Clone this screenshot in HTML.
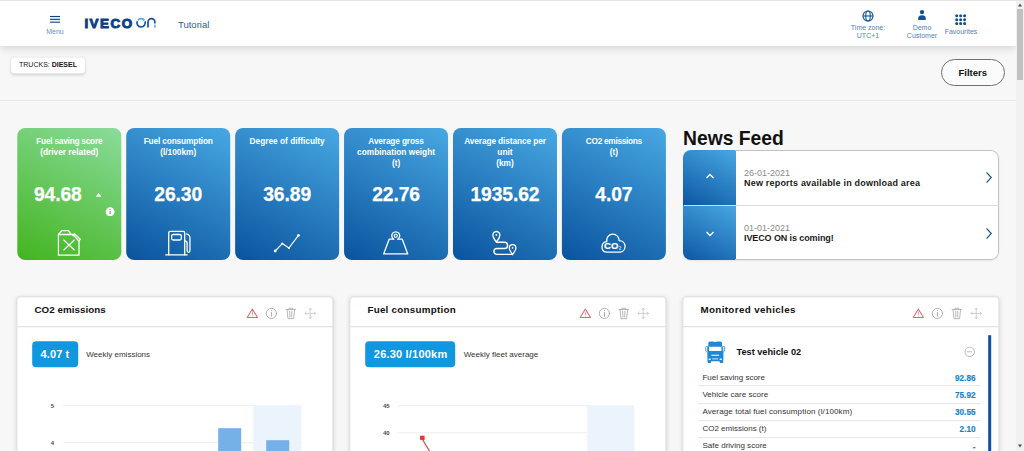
<!DOCTYPE html>
<html lang="en">
<head>
<meta charset="utf-8">
<title>IVECO ON - Tutorial</title>
<style>
*{box-sizing:border-box;margin:0;padding:0}
html,body{width:1024px;height:451px;overflow:hidden;background:#f7f7f7;font-family:"Liberation Sans","DejaVu Sans",sans-serif;color:#1a1a1a}
.abs{position:absolute}
#page{position:absolute;left:0;top:0;width:1016px;height:451px;overflow:hidden;background:#f7f7f7}
#topline{position:absolute;left:0;top:0;width:1024px;height:1px;background:#e4e4e4;z-index:20}
#hdr{position:absolute;left:0;top:0;width:1016px;height:45.600px;background:#fff;box-shadow:0 3px 8px rgba(0,0,0,.13);z-index:10}
.nav{position:absolute;color:#5382b3;font-size:7px;text-align:center;white-space:nowrap;line-height:8px}
#sep{position:absolute;left:0;top:100px;width:1016px;height:1px;background:#e9e9e9}
.chip{position:absolute;left:11px;top:57px;transform:translateY(.4px);width:74px;height:16px;background:#fff;border-radius:4px;box-shadow:0 1px 3px rgba(0,0,0,.18);font-size:7px;line-height:16.500px;text-align:center;color:#161616;white-space:nowrap}
.filters{position:absolute;left:941px;top:58.500px;width:63.500px;height:27.600px;border:1px solid #707070;border-radius:14px;background:#fbfbfb;font-size:9.5px;font-weight:bold;line-height:25.600px;text-align:center;color:#111}
.kpi{position:absolute;top:128px;width:104px;height:132.300px;border-radius:8px;background:linear-gradient(28deg,#0a539e 0%,#48a8e2 100%);color:#fff;text-align:center}
.kpi.g{background:linear-gradient(28deg,#43b41f 0%,#8adc9c 100%)}
.kpi .t{position:absolute;left:0;right:0;top:8.4px;font-size:8.3px;line-height:11px;font-weight:bold;white-space:nowrap}
.kpi .v{position:absolute;left:0;right:0;top:55px;font-size:19.300px;line-height:24px;font-weight:bold;white-space:nowrap;-webkit-text-stroke:.25px #fff;letter-spacing:-.1px}
.kpi svg{position:absolute}
h1.nf{position:absolute;left:683px;top:127.400px;font-size:19.3px;line-height:24px;font-weight:bold;color:#111;white-space:nowrap}
.news{position:absolute;left:683px;top:149.700px;width:316.300px;height:110.600px;border-radius:8px;background:#fff;overflow:hidden;box-shadow:0 1px 2px rgba(0,0,0,.08)}
.news>*{margin-left:1px;margin-top:1px}
.news .bd{position:absolute;left:52px;top:0;right:0;bottom:0;margin:0;border:1px solid #c2c2c2;border-left:none;border-radius:0 8px 8px 0}
.news .col{position:absolute;left:0;top:0;margin:0;width:53px;height:55.500px;background:linear-gradient(28deg,#0c56a2 0%,#48a8e2 100%)}
.news .div{position:absolute;left:0;top:54.300px;width:316px;height:1px;background:#dcdcdc}
.news .d{position:absolute;left:60px;font-size:9px;line-height:10px;color:#8a8a8a;white-space:nowrap}
.news .h{position:absolute;left:60px;font-size:9px;letter-spacing:.2px;line-height:10px;color:#1a1a1a;font-weight:bold;white-space:nowrap}
.w{position:absolute;top:297px;width:316.800px;height:170px;background:#fff;border:1px solid #e0e0e0;border-radius:4px;box-shadow:0 1px 4px rgba(0,0,0,.13);transform:translate(-.6px,-.6px)}
.w .in{position:absolute;left:0;top:0;right:0;bottom:0;transform:translate(.8px,.8px)}
.w .hd{position:absolute;left:-1px;top:-1px;width:316px;height:30px;border-bottom:1px solid #dedede}
.w .ti{position:absolute;left:16.200px;top:5.100px;font-size:9.8px;line-height:13px;font-weight:bold;color:#111;white-space:nowrap}
.badge{position:absolute;left:14px;top:43px;height:26px;border-radius:4px;background:#1197e0;color:#fff;font-size:11px;letter-spacing:.1px;font-weight:bold;line-height:26px;text-align:center;white-space:nowrap}
.lbl{position:absolute;top:52px;font-size:8px;line-height:10px;color:#333;white-space:nowrap}
.ax{position:absolute;font-size:6px;line-height:8px;color:#4a4a4a;font-weight:bold;text-align:right;width:12px}
.gl{position:absolute;height:1px;background:#eeeeee}
.rl{position:absolute;left:14.300px;width:281.400px;height:1px;background:#e4e4e4}
.row{position:absolute;left:16.5px;width:279.5px;height:17px;padding-left:1.7px;font-size:8px;letter-spacing:.05px;line-height:17px;color:#333;white-space:nowrap}
.row b{position:absolute;right:4.700px;top:.600px;color:#1583cf;font-size:8.200px;letter-spacing:0;-webkit-text-stroke:.15px #1583cf}
#sb{position:absolute;left:1016px;top:0;width:8px;height:451px;background:#f1f1f1}
#sb .th{position:absolute;left:1.300px;top:9px;width:5.700px;height:71px;background:#c1c1c1}
</style>
</head>
<body>
<div id="page">
  <div id="hdr">
    <svg class="abs" style="left:50px;top:15px" width="10" height="9" viewBox="0 0 10 9"><rect x="0" y="1.400" width="10" height="5.800" fill="#d9ebf8" opacity=".7"/><rect x="0" y=".95" width="10" height="1.050" fill="#133f78"/><rect x="0" y="3.800" width="10" height="1.050" fill="#133f78"/><rect x="0" y="6.650" width="10" height="1.150" fill="#2a5388"/></svg>
    <div class="nav" style="left:40px;top:28px;width:30px;color:#6690bb">Menu</div>
    <div class="abs" id="logo" style="left:84.400px;top:15.600px;font-size:13.400px;line-height:16px;font-weight:bold;color:#0b3f86;letter-spacing:1.500px;white-space:nowrap;-webkit-text-stroke:.95px #0b3f86;transform:scaleX(1.0);transform-origin:0 0">IVECO</div>
    <svg class="abs" style="left:135px;top:16px" width="24" height="14" viewBox="0 0 24 14" fill="none" stroke-width="1.650">
      <path d="M2.920 4.130 A4.150 4.150 0 0 1 9.500 4.420" stroke="#4ab0e8"/>
      <path d="M10 5.380 A4.150 4.150 0 1 1 2.340 5.050" stroke="#14509a"/>
      <path d="M13 11.6 V6.1 A3.45 3.45 0 0 1 19.9 6.1 V7.4" stroke="#14509a"/>
      <rect x="19.15" y="8.6" width="1.5" height="3" fill="#4ab0e8" stroke="none"/>
    </svg>
    <div class="abs" style="left:178px;top:18.500px;font-size:9.5px;line-height:12px;color:#2a5f99;white-space:nowrap">Tutorial</div>

    <svg class="abs" style="left:862.300px;top:9.500px" width="12" height="12" viewBox="0 0 12 12" fill="none" stroke="#1a5796" stroke-width="1.150"><circle cx="6" cy="6" r="5"/><ellipse cx="6" cy="6" rx="2.300" ry="5"/><path d="M1 6H11"/></svg>
    <div class="nav" style="left:838px;top:23.5px;width:60px;line-height:8.5px">Time zone:<br>UTC+1</div>
    <svg class="abs" style="left:917px;top:9px" width="10" height="12" viewBox="0 0 10 12" fill="#14509a"><circle cx="5" cy="3.100" r="2.200"/><path d="M1.200 11 V9.600 Q1.200 6.200 5 6.200 Q8.800 6.200 8.800 9.600 V11 Z"/></svg>
    <div class="nav" style="left:892px;top:23.5px;width:60px;line-height:8.5px">Demo<br>Customer</div>
    <svg class="abs" style="left:955.200px;top:13.600px" width="11.300" height="11.300" viewBox="0 0 12 12" fill="#14509a"><circle cx="1.8" cy="1.8" r="1.6"/><circle cx="6" cy="1.8" r="1.6"/><circle cx="10.2" cy="1.8" r="1.6"/><circle cx="1.8" cy="6" r="1.6"/><circle cx="6" cy="6" r="1.6"/><circle cx="10.2" cy="6" r="1.6"/><circle cx="1.8" cy="10.2" r="1.6"/><circle cx="6" cy="10.2" r="1.6"/><circle cx="10.2" cy="10.2" r="1.6"/></svg>
    <div class="nav" style="left:931px;top:27.700px;width:60px">Favourites</div>
  </div>

  <div class="chip">TRUCKS: <b>DIESEL</b></div>
  <div class="filters">Filters</div>
  <div id="sep"></div>

  <!-- KPI cards -->
  <div class="kpi g" style="left:17px;transform:translateX(0.3px)">
    <div class="t"><span style="letter-spacing:-.24px">Fuel saving score</span><br>(driver related)</div>
    <div class="v" style="left:-23px">94.68</div>
    <svg style="left:78.300px;top:63.800px" width="6.600" height="5.500" viewBox="0 0 6 5"><path d="M3 0.6 L5.6 4.4 H0.4 Z" fill="#fff"/></svg>
    <svg style="left:88.300px;top:78.700px" width="9.600" height="9.600" viewBox="0 0 9 9"><circle cx="4.5" cy="4.5" r="4.2" fill="#fff"/><rect x="4" y="3.8" width="1" height="3" fill="#4cb82e"/><rect x="4" y="2" width="1" height="1" fill="#4cb82e"/></svg>
    <svg style="left:40px;top:100px" width="26" height="30" viewBox="0 0 26 30" fill="none" stroke="#fff" stroke-width="1.3" stroke-linejoin="round" stroke-linecap="round"><path d="M1.1 27.2 V6.5 H15.5 L21.7 13 V27.2 Z"/><path d="M1.1 6.500 L4.400 2.700 H11.200 L13.700 6.500"/><path d="M15.500 7.500 L17.100 5.700 L23 11.200 L21.300 13"/><path d="M6.500 12 L17 22 M17 12 L6.500 22" stroke-width="1.1"/></svg>
  </div>
  <div class="kpi" style="left:126px;transform:translateX(0.22px)">
    <div class="t"><span style="letter-spacing:-.15px">Fuel consumption</span><br>(l/100km)</div>
    <div class="v">26.30</div>
    <svg style="left:38px;top:101px" width="28" height="28" viewBox="0 0 28 28" fill="none" stroke="#fff" stroke-width="1.3" stroke-linejoin="round" stroke-linecap="round"><path d="M4.500 25.800 V4 Q4.500 2.400 6.100 2.400 H18.900 Q20.500 2.400 20.500 4 V25.800"/><path d="M1.500 25.800 H23"/><rect x="7.400" y="5.500" width="9.700" height="5.500" rx="1.500"/><path d="M20.500 11.800 Q22.900 11.800 22.900 14 V21.500 Q22.900 23.300 24.300 23.300 Q25.700 23.300 25.700 21.500 V8.800 Q25.700 5.800 22.300 4.900"/></svg>
  </div>
  <div class="kpi" style="left:235px;transform:translateX(0.14px)">
    <div class="t">Degree of difficulty</div>
    <div class="v">36.89</div>
    <svg style="left:36px;top:104px" width="32" height="24" viewBox="0 0 32 24" fill="none" stroke="#fff" stroke-width="1.3" stroke-linejoin="round" stroke-linecap="round"><path d="M4.100 19 L11.100 11.600 L17.800 16 L27.300 3.400" stroke-width="1.200"/><circle cx="4.100" cy="19" r="1.400" fill="#fff" stroke="none"/><circle cx="27.300" cy="3.400" r="1.400" fill="#fff" stroke="none"/><circle cx="11.100" cy="11.600" r="1" fill="#fff" stroke="none"/><circle cx="17.800" cy="16" r="1" fill="#fff" stroke="none"/></svg>
  </div>
  <div class="kpi" style="left:344px;transform:translateX(0.06px)">
    <div class="t"><span style="letter-spacing:-.15px">Average gross</span><br>combination weight<br>(t)</div>
    <div class="v">22.76</div>
    <svg style="left:36px;top:100px" width="32" height="28" viewBox="0 0 32 28" fill="none" stroke="#fff" stroke-width="1.3" stroke-linejoin="round" stroke-linecap="round"><path d="M13.600 11.200 H9.100 L3.600 25.900 H27.700 L22.200 11.200 H17.800"/><path d="M13.600 11.200 A4 4 0 1 1 17.800 11.200"/><circle cx="15.700" cy="7.800" r="1.600" stroke-width="1.100"/></svg>
  </div>
  <div class="kpi" style="left:453px;transform:translateX(-0.02px)">
    <div class="t"><span style="letter-spacing:-.1px">Average distance per</span><br>unit<br>(km)</div>
    <div class="v">1935.62</div>
    <svg style="left:36px;top:100px" width="32" height="30" viewBox="0 0 32 30" fill="none" stroke="#fff" stroke-width="1.3" stroke-linejoin="round" stroke-linecap="round"><path d="M7.4 14.1 C6.18 11.90 3.9000000000000004 10.32 3.9000000000000004 7 A3.5 3.5 0 1 1 10.9 7 C10.9 10.32 8.62 11.90 7.4 14.1 Z"/><circle cx="7.400" cy="6.900" r=".9" fill="#fff" stroke="none"/><path d="M23.6 26.6 C22.45 24.40 20.3 23.03 20.3 19.9 A3.3 3.3 0 1 1 26.900000000000002 19.9 C26.900000000000002 23.03 24.76 24.40 23.6 26.6 Z"/><circle cx="23.600" cy="19.800" r=".9" fill="#fff" stroke="none"/><path d="M7.600 14.300 H15.500 A3.100 3.100 0 0 1 15.500 20.500 H7.900 A2.950 2.950 0 0 0 7.900 26.400 H23.300" stroke-width="1.400"/></svg>
  </div>
  <div class="kpi" style="left:562px;transform:translateX(-0.1px)">
    <div class="t"><span style="letter-spacing:-.3px">CO2 emissions</span><br>(t)</div>
    <div class="v">4.07</div>
    <svg style="left:36px;top:102px" width="32" height="26" viewBox="0 0 32 26" fill="none" stroke="#fff" stroke-width="1.3" stroke-linejoin="round" stroke-linecap="round"><path d="M8.500 22.200 A5.300 5.300 0 0 1 8.900 11.700 A6.220 6.220 0 1 1 21.200 10.600 A5.850 5.850 0 0 1 22.400 22.200 Z"/><text x="6.200" y="19.400" textLength="14.300" lengthAdjust="spacingAndGlyphs" font-family="Liberation Sans, sans-serif" font-size="8.600" font-weight="bold" fill="#fff" stroke="#fff" stroke-width=".2">CO</text><text x="20.900" y="20.300" font-family="Liberation Sans, sans-serif" font-size="4.500" font-weight="bold" fill="#bfe3fa" stroke="none">2</text></svg>
  </div>

  <!-- News feed -->
  <h1 class="nf">News Feed</h1>
  <div class="news">
    <div class="col"></div>
    <div class="col" style="top:55.500px"></div>
    <div class="bd"></div>
    <div class="div"></div>
    <svg class="abs" style="left:21px;top:22px" width="10" height="6" viewBox="0 0 10 6" fill="none" stroke="#fff" stroke-width="1.3"><path d="M1.500 5 L5 1.500 L8.500 5"/></svg>
    <svg class="abs" style="left:21px;top:80px" width="10" height="6" viewBox="0 0 10 6" fill="none" stroke="#fff" stroke-width="1.3"><path d="M1.500 1 L5 4.500 L8.500 1"/></svg>
    <div class="d" style="top:17px">26-01-2021</div>
    <div class="h" style="top:27px">New reports available in download area</div>
    <div class="d" style="top:72px">01-01-2021</div>
    <div class="h" style="top:82px;letter-spacing:-.1px">IVECO ON is coming!</div>
    <svg class="abs" style="left:300.700px;top:20.500px" width="8" height="13" viewBox="0 0 8 13" fill="none" stroke="#14509a" stroke-width="1.150"><path d="M1.500 1.300 L6.300 6.500 L1.500 11.700"/></svg>
    <svg class="abs" style="left:300.700px;top:76px" width="8" height="13" viewBox="0 0 8 13" fill="none" stroke="#14509a" stroke-width="1.150"><path d="M1.500 1.300 L6.300 6.500 L1.500 11.700"/></svg>
  </div>

  <!-- widgets -->
  <div class="w" style="left:17px">
    <div class="in">
    <div class="hd"></div>
    <div class="ti" style="letter-spacing:.05px">CO2 emissions</div>
    <svg class="abs" style="left:226px;top:8px" width="80" height="16" viewBox="0 0 80 16" fill="none" stroke-linejoin="round" stroke-linecap="round"><path d="M8.150 2.900 L13.300 11.400 H3 Z" stroke="#d96b74" stroke-width="1.050"/><path d="M8.150 5.700 V8.600 M8.150 9.900 V10" stroke="#e39aa0" stroke-width=".9"/><circle cx="27.200" cy="7.200" r="5.100" stroke="#9c9c9c" stroke-width=".8"/><path d="M27.200 6.300 V10 M27.200 4.300 V4.400" stroke="#9c9c9c" stroke-width=".9"/><path d="M41.900 3.300 H51.300 M44.800 3.200 V2 H48.400 V3.200 M42.800 3.500 L43.800 12.500 H49.400 L50.400 3.500 M45.500 5 L45.700 11 M47.700 5 L47.500 11" stroke="#a6a6a6" stroke-width=".8"/><path d="M60.800 7.200 H71.200 M66 2 V12.400 M62.200 5.800 L60.800 7.200 L62.200 8.600 M69.800 5.800 L71.200 7.200 L69.800 8.600 M64.600 3.400 L66 2 L67.400 3.400 M64.600 11 L66 12.400 L67.400 11" stroke="#bdbdbd" stroke-width=".7"/></svg>
    <div class="badge" style="width:45.600px">4.07 t</div>
    <div class="lbl" style="left:68px">Weekly emissions</div>
    <div class="ax" style="left:24px;top:104px">5</div>
    <div class="ax" style="left:24px;top:141px">4</div>
    <div class="gl" style="left:44.500px;top:107px;width:239px"></div>
    <div class="gl" style="left:44.500px;top:144px;width:239px"></div>
    <div class="abs" style="left:235.300px;top:107px;width:48.200px;height:62px;background:#ebf4fd"></div>
    <div class="abs" style="left:200.400px;top:130px;width:22.800px;height:40px;background:#76b0e9"></div>
    <div class="abs" style="left:248.200px;top:142.400px;width:22.800px;height:30px;background:#76b0e9"></div>
    </div>
  </div>
  <div class="w" style="left:350px">
    <div class="in">
    <div class="hd"></div>
    <div class="ti" style="letter-spacing:.27px">Fuel consumption</div>
    <svg class="abs" style="left:226px;top:8px" width="80" height="16" viewBox="0 0 80 16" fill="none" stroke-linejoin="round" stroke-linecap="round"><path d="M8.150 2.900 L13.300 11.400 H3 Z" stroke="#d96b74" stroke-width="1.050"/><path d="M8.150 5.700 V8.600 M8.150 9.900 V10" stroke="#e39aa0" stroke-width=".9"/><circle cx="27.200" cy="7.200" r="5.100" stroke="#9c9c9c" stroke-width=".8"/><path d="M27.200 6.300 V10 M27.200 4.300 V4.400" stroke="#9c9c9c" stroke-width=".9"/><path d="M41.900 3.300 H51.300 M44.800 3.200 V2 H48.400 V3.200 M42.800 3.500 L43.800 12.500 H49.400 L50.400 3.500 M45.500 5 L45.700 11 M47.700 5 L47.500 11" stroke="#a6a6a6" stroke-width=".8"/><path d="M60.800 7.200 H71.200 M66 2 V12.400 M62.200 5.800 L60.800 7.200 L62.200 8.600 M69.800 5.800 L71.200 7.200 L69.800 8.600 M64.600 3.400 L66 2 L67.400 3.400 M64.600 11 L66 12.400 L67.400 11" stroke="#bdbdbd" stroke-width=".7"/></svg>
    <div class="badge" style="left:14.300px;width:90.200px;letter-spacing:.2px">26.30 l/100km</div>
    <div class="lbl" style="left:112.500px">Weekly fleet average</div>
    <div class="ax" style="left:26.500px;top:104px">45</div>
    <div class="ax" style="left:26.500px;top:131px">40</div>
    <div class="gl" style="left:47.300px;top:107px;width:236.200px"></div>
    <div class="gl" style="left:47.300px;top:134px;width:236.200px"></div>
    <div class="abs" style="left:236.100px;top:107px;width:47.400px;height:62px;background:#ebf4fd"></div>
    <svg class="abs" style="left:66px;top:134px" width="20" height="22" viewBox="0 0 20 22"><rect x="2.900" y="3.500" width="4.500" height="4.300" fill="#e53935"/><path d="M5.200 7 L12.400 19" stroke="#e0474a" stroke-width="1.250" fill="none"/></svg>
    </div>
  </div>
  <div class="w" style="left:683px">
    <div class="in">
    <div class="hd"></div>
    <div class="ti" style="letter-spacing:.37px">Monitored vehicles</div>
    <svg class="abs" style="left:226px;top:8px" width="80" height="16" viewBox="0 0 80 16" fill="none" stroke-linejoin="round" stroke-linecap="round"><path d="M8.150 2.900 L13.300 11.400 H3 Z" stroke="#d96b74" stroke-width="1.050"/><path d="M8.150 5.700 V8.600 M8.150 9.900 V10" stroke="#e39aa0" stroke-width=".9"/><circle cx="27.200" cy="7.200" r="5.100" stroke="#9c9c9c" stroke-width=".8"/><path d="M27.200 6.300 V10 M27.200 4.300 V4.400" stroke="#9c9c9c" stroke-width=".9"/><path d="M41.900 3.300 H51.300 M44.800 3.200 V2 H48.400 V3.200 M42.800 3.500 L43.800 12.500 H49.400 L50.400 3.500 M45.500 5 L45.700 11 M47.700 5 L47.500 11" stroke="#a6a6a6" stroke-width=".8"/><path d="M60.800 7.200 H71.200 M66 2 V12.400 M62.200 5.800 L60.800 7.200 L62.200 8.600 M69.800 5.800 L71.200 7.200 L69.800 8.600 M64.600 3.400 L66 2 L67.400 3.400 M64.600 11 L66 12.400 L67.400 11" stroke="#bdbdbd" stroke-width=".7"/></svg>
    <div class="abs" style="left:304.300px;top:37px;width:2.300px;height:130px;background:#0d4f9a"></div>
    <svg class="abs" style="left:20px;top:42px" width="24" height="25" viewBox="0 0 24 25"><g fill="#1e88d8"><path d="M4.100 6.600 V3.400 Q4.100 1.400 6.100 1.400 H15.900 Q17.900 1.400 17.900 3.400 V6.600 Z"/><rect x="3.200" y="10.900" width="16" height="10.200" rx="1.200"/><rect x="3.400" y="20.300" width="3.500" height="2.600" rx=".8"/><rect x="15.500" y="20.300" width="3.500" height="2.600" rx=".8"/><rect x="3.500" y="6.200" width="1.300" height="5.200"/><rect x="17.200" y="6.200" width="1.300" height="5.200"/></g><g fill="none" stroke="#1e88d8" stroke-width=".8"><rect x="1.500" y="6.300" width="1.900" height="4.800" rx=".7"/><rect x="18.600" y="6.300" width="1.900" height="4.800" rx=".7"/></g><g fill="#fff"><rect x="7" y="14.500" width="8" height="1" rx=".4"/><rect x="4.300" y="18.400" width="2.300" height="1.300" rx=".6"/><rect x="15.400" y="18.400" width="2.300" height="1.300" rx=".6"/><rect x="8" y="18.300" width="6" height=".8"/><rect x="9.300" y=".900" width="3.400" height="1" rx=".5" opacity=".75"/></g></svg>
    <div class="abs" style="left:52.300px;top:48px;font-size:9.200px;line-height:12px;font-weight:bold;color:#111;white-space:nowrap">Test vehicle 02</div>
    <svg class="abs" style="left:280px;top:48px" width="11" height="11" viewBox="0 0 11 11" fill="none" stroke="#a8a8a8" stroke-width=".8"><circle cx="5.500" cy="5.600" r="4.750"/><path d="M3.200 5.600 H7.800"/></svg>
    <div class="row" style="top:71px;letter-spacing:-.01px">Fuel saving score<b>92.86</b></div>
    <div class="row" style="top:88.100px;letter-spacing:.02px">Vehicle care score<b>75.92</b></div>
    <div class="row" style="top:105.200px;letter-spacing:.115px">Average total fuel consumption (l/100km)<b>30.55</b></div>
    <div class="row" style="top:122.300px;letter-spacing:0">CO2 emissions (t)<b>2.10</b></div>
    <div class="row" style="top:139.400px;letter-spacing:.02px">Safe driving score<b style="top:1.800px">-</b></div>
    <div class="rl" style="top:87.400px"></div>
    <div class="rl" style="top:104.800px"></div>
    <div class="rl" style="top:121.900px"></div>
    <div class="rl" style="top:139.300px"></div>
    </div>
  </div>
</div>
<div id="sb"><div class="th"></div><svg class="abs" style="left:0;top:0" width="8" height="451" viewBox="0 0 8 451"><path d="M2 6.500 L4 3.500 L6 6.500 Z" fill="#505050"/><path d="M2 444.500 L4 447.500 L6 444.500 Z" fill="#505050"/></svg></div>
<div id="topline"></div>
</body>
</html>
